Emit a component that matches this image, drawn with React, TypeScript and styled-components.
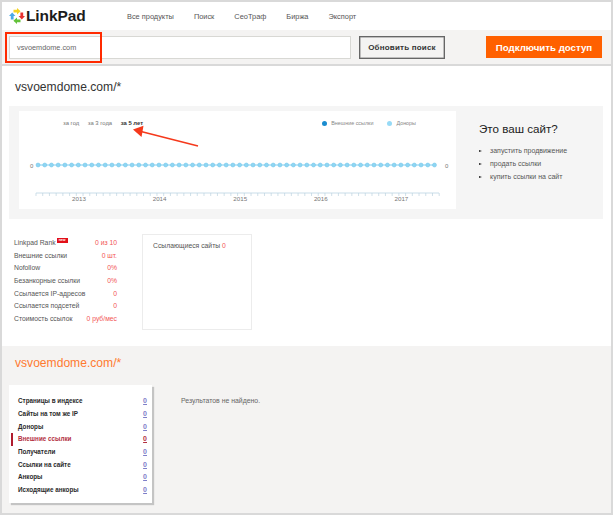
import React from 'react';
import styled, { createGlobalStyle } from 'styled-components';

const GlobalStyle = createGlobalStyle`
  html, body {
    margin: 0;
    padding: 0;
    background: #d9d9d9;
    font-family: "Liberation Sans", Arial, sans-serif;
    overflow: hidden;
  }
  * { box-sizing: border-box; }
`;

const Frame = styled.div`
  position: relative;
  width: 613px;
  height: 515px;
  padding: 2px;
  background: #d9d9d9;
`;

const Page = styled.div`
  display: flex;
  flex-direction: column;
  height: 511px;
  background: #fff;
`;

const Header = styled.header`
  display: flex;
  align-items: center;
  height: 28px;
  padding-left: 7px;
`;

const LogoWrap = styled.div`
  display: flex;
  align-items: center;
  gap: 1px;
  width: 118px;
`;

const LogoText = styled.span`
  font-size: 15.5px;
  font-weight: 700;
  color: #1c1c1c;
  letter-spacing: -0.1px;
`;

const Nav = styled.nav`
  display: flex;
  gap: 20px;
`;

const NavItem = styled.span`
  font-size: 7.4px;
  color: #555;
`;

const SearchBar = styled.div`
  display: flex;
  align-items: flex-start;
  height: 36px;
  padding: 6px 9px 0 7px;
  background: #f4f3f2;
  border-bottom: 2px solid #d9d9d9;
`;

const SearchInput = styled.div`
  display: flex;
  align-items: center;
  width: 342px;
  height: 23px;
  padding-left: 7px;
  background: #fff;
  border: 1px solid #d8d8d4;
  font-size: 7.3px;
  color: #666;
`;

const RefreshButton = styled.button`
  width: 86px;
  height: 23px;
  margin-left: 8px;
  padding: 0;
  background: #f4f3f2;
  border: 1px solid #666;
  box-shadow: inset 0 0 0 0.5px #888;
  font-family: inherit;
  font-size: 8px;
  font-weight: 700;
  letter-spacing: 0.2px;
  color: #333;
`;

const AccessButton = styled.button`
  width: 116px;
  height: 22px;
  margin-left: auto;
  padding: 0;
  background: #ff6000;
  border: none;
  font-family: inherit;
  font-size: 9.7px;
  font-weight: 700;
  color: #fff;
`;

const Summary = styled.section`
  display: flex;
  flex-direction: column;
  height: 280px;
`;

const SiteTitle = styled.h1<{ $accent?: boolean }>`
  margin: 0;
  padding: 0 0 0 13px;
  font-size: 12.1px;
  font-weight: 400;
  line-height: 18px;
  color: ${({ $accent }) => ($accent ? '#ff7a30' : '#333')};
`;

const TitleRow = styled.div`
  display: flex;
  align-items: center;
  height: 40px;
  padding-top: 2px;
`;

const ChartPanel = styled.div`
  display: flex;
  width: 594px;
  height: 113px;
  margin-left: 7px;
  padding: 5px 0 0 10px;
  background: #f5f5f5;
`;

const ChartCard = styled.div`
  position: relative;
  width: 437px;
  height: 98px;
  background: #fff;
`;

const ChartTop = styled.div`
  display: flex;
  align-items: center;
  height: 24px;
  padding-left: 44px;
`;

const RangeTab = styled.span<{ $active?: boolean }>`
  margin-right: 8.5px;
  font-size: 5.9px;
  font-weight: ${({ $active }) => ($active ? 700 : 400)};
  color: ${({ $active }) => ($active ? '#333' : '#777')};
`;

const Legend = styled.div`
  display: flex;
  align-items: center;
  margin-left: auto;
  padding-right: 40px;
`;

const LegendDot = styled.i<{ $color: string }>`
  width: 5px;
  height: 5px;
  margin-right: 4px;
  border-radius: 50%;
  background: ${({ $color }) => $color};
`;

const LegendLabel = styled.span`
  margin-right: 14px;
  font-size: 5.4px;
  color: #888;
  &:last-child { margin-right: 0; }
`;

const ArrowOverlay = styled.svg`
  position: absolute;
  left: 110px;
  top: 14px;
`;

const Promo = styled.div`
  padding: 10px 0 0 23px;
`;

const PromoTitle = styled.h2`
  margin: 0 0 7px;
  font-size: 11.6px;
  font-weight: 400;
  line-height: 16px;
  color: #222;
`;

const PromoList = styled.ul`
  margin: 0;
  padding: 0;
  list-style: none;
`;

const PromoItem = styled.li`
  display: flex;
  align-items: center;
  height: 13.1px;
  font-size: 7px;
  color: #555;
  &::before {
    content: '';
    width: 0;
    height: 0;
    margin-right: 8px;
    border-left: 3px solid #222;
    border-top: 1.5px solid transparent;
    border-bottom: 1.5px solid transparent;
  }
`;

const StatsRow = styled.div`
  display: flex;
  align-items: flex-start;
  padding: 15px 0 0 12px;
`;

const StatsTable = styled.div`
  display: flex;
  flex-direction: column;
  width: 103px;
  padding-top: 2px;
`;

const StatLine = styled.div`
  display: flex;
  justify-content: space-between;
  align-items: center;
  height: 12.7px;
  font-size: 6.8px;
  color: #555;
`;

const StatLabel = styled.span`
  position: relative;
  white-space: nowrap;
`;

const StatValue = styled.span`
  color: #f25555;
  white-space: nowrap;
`;

const NewBadge = styled.b`
  position: absolute;
  right: -12px;
  top: -1px;
  width: 11px;
  height: 5px;
  background: #e2101a;
  color: #fff;
  font-size: 3.5px;
  line-height: 5px;
  text-align: center;
`;

const SitesCard = styled.div`
  width: 110px;
  height: 96px;
  margin-left: 25px;
  padding: 6px 10px;
  border: 1px solid #ececec;
  font-size: 6.8px;
  line-height: 10px;
  color: #555;
`;

const Results = styled.section`
  flex: 1;
  padding-left: 7px;
  background: #f4f3f2;
`;

const ResultsTitle = styled(SiteTitle)`
  margin-left: -7px;
`;

const ResultsTitleRow = styled.div`
  display: flex;
  align-items: center;
  height: 39px;
  padding-bottom: 5px;
`;

const ResultsBody = styled.div`
  display: flex;
  align-items: flex-start;
`;

const SideMenu = styled.div`
  width: 143px;
  height: 118px;
  padding-top: 9.5px;
  background: #fff;
  box-shadow: 2px 2px 1px #c4c4c4;
`;

const MenuRow = styled.div<{ $active?: boolean }>`
  position: relative;
  display: flex;
  justify-content: space-between;
  align-items: center;
  height: 12.7px;
  padding: 0 5px 0 9px;
  font-size: 6.3px;
  font-weight: 700;
  color: ${({ $active }) => ($active ? '#b3303f' : '#2a2a2a')};
  &::before {
    content: '';
    display: ${({ $active }) => ($active ? 'block' : 'none')};
    position: absolute;
    left: 2px;
    top: 0;
    width: 2px;
    height: 13px;
    background: #b01c2e;
  }
`;

const MenuCount = styled.span<{ $active?: boolean }>`
  font-size: 7px;
  color: ${({ $active }) => ($active ? '#b3303f' : '#7f7fc9')};
  text-decoration: underline;
`;

const NoResults = styled.div`
  margin: 11px 0 0 29px;
  font-size: 6.9px;
  line-height: 10px;
  color: #666;
`;

const SearchHighlight = styled.div`
  position: absolute;
  left: 5px;
  top: 32px;
  width: 97px;
  height: 31px;
  border: 2px solid #ff2a00;
`;

const logoArrow = 'M4.5 1.8H8V0l3.6 3.2L8 6.4V4.6H4.5z';
const logoColors = ['#f5d321', '#e8322e', '#63c23a', '#4aa8e8'];

const Logo = () => (
  <svg width="16" height="16" viewBox="0 0 16 16">
    {logoColors.map((color, i) => (
      <path key={color} d={logoArrow} fill={color} transform={`rotate(${i * 90} 8 8)`} />
    ))}
  </svg>
);

const years = ['2013', '2014', '2015', '2016', '2017'];
const points = Array.from({ length: 60 }, (_, i) => 19 + i * 6.72);
const ticks = Array.from({ length: 61 }, (_, i) => 17 + i * 6.72);

const TrendChart = () => (
  <svg width="437" height="74" viewBox="0 0 437 74">
    <text x="11" y="32.5" fontSize="6" fill="#777">0</text>
    <text x="426" y="32.5" fontSize="6" fill="#777">0</text>
    <line x1="19" y1="30" x2="416" y2="30" stroke="#7fcdee" strokeWidth="1" />
    {points.map(x => (
      <circle key={x} cx={x} cy="30" r="2" fill="#8fd6f3" stroke="#6cc3e8" strokeWidth="0.5" />
    ))}
    <line x1="17" y1="58" x2="420" y2="58" stroke="#c9dde9" strokeWidth="1" />
    {ticks.map(x => (
      <line key={x} x1={x} y1="58" x2={x} y2="61" stroke="#bcd2df" strokeWidth="0.7" />
    ))}
    {years.map((year, i) => (
      <text key={year} x={60 + i * 80.6} y="66" fontSize="6.2" fill="#777" textAnchor="middle">{year}</text>
    ))}
  </svg>
);

const stats = [
  ['Внешние ссылки', '0 шт.'],
  ['Nofollow', '0%'],
  ['Безанкорные ссылки', '0%'],
  ['Ссылается IP-адресов', '0'],
  ['Ссылается подсетей', '0'],
  ['Стоимость ссылок', '0 руб/мес'],
];

const menu = [
  'Страницы в индексе',
  'Сайты на том же IP',
  'Доноры',
  'Внешние ссылки',
  'Получатели',
  'Ссылки на сайте',
  'Анкоры',
  'Исходящие анкоры',
];

const App: React.FC = () => {
  return (
    <Frame>
      <GlobalStyle />
      <Page>
        <Header>
          <LogoWrap>
            <Logo />
            <LogoText>LinkPad</LogoText>
          </LogoWrap>
          <Nav>
            <NavItem>Все продукты</NavItem>
            <NavItem>Поиск</NavItem>
            <NavItem>СеоТраф</NavItem>
            <NavItem>Биржа</NavItem>
            <NavItem>Экспорт</NavItem>
          </Nav>
        </Header>

        <SearchBar>
          <SearchInput>vsvoemdome.com</SearchInput>
          <RefreshButton>Обновить поиск</RefreshButton>
          <AccessButton>Подключить доступ</AccessButton>
        </SearchBar>

        <Summary>
          <TitleRow>
            <SiteTitle>vsvoemdome.com/*</SiteTitle>
          </TitleRow>
          <ChartPanel>
            <ChartCard>
              <ChartTop>
                <RangeTab>за год</RangeTab>
                <RangeTab>за 3 года</RangeTab>
                <RangeTab $active>за 5 лет</RangeTab>
                <Legend>
                  <LegendDot $color="#1a8ccf" />
                  <LegendLabel>Внешние ссылки</LegendLabel>
                  <LegendDot $color="#97daf6" />
                  <LegendLabel>Доноры</LegendLabel>
                </Legend>
              </ChartTop>
              <TrendChart />
              <ArrowOverlay width="72" height="26" viewBox="0 0 72 26">
                <line x1="69" y1="21" x2="12" y2="6.5" stroke="#f5391c" strokeWidth="1.6" />
                <path d="M4 4.5 14.5 .8 12.5 12z" fill="#f5391c" />
              </ArrowOverlay>
            </ChartCard>
            <Promo>
              <PromoTitle>Это ваш сайт?</PromoTitle>
              <PromoList>
                <PromoItem>запустить продвижение</PromoItem>
                <PromoItem>продать ссылки</PromoItem>
                <PromoItem>купить ссылки на сайт</PromoItem>
              </PromoList>
            </Promo>
          </ChartPanel>

          <StatsRow>
            <StatsTable>
              <StatLine>
                <StatLabel>
                  Linkpad Rank
                  <NewBadge>new</NewBadge>
                </StatLabel>
                <StatValue>0 из 10</StatValue>
              </StatLine>
              {stats.map(([label, value]) => (
                <StatLine key={label}>
                  <StatLabel>{label}</StatLabel>
                  <StatValue>{value}</StatValue>
                </StatLine>
              ))}
            </StatsTable>
            <SitesCard>
              Ссылающиеся сайты <StatValue>0</StatValue>
            </SitesCard>
          </StatsRow>
        </Summary>

        <Results>
          <ResultsTitleRow>
            <ResultsTitle $accent>vsvoemdome.com/*</ResultsTitle>
          </ResultsTitleRow>
          <ResultsBody>
            <SideMenu>
              {menu.map((item, i) => (
                <MenuRow key={item} $active={i === 3}>
                  {item}
                  <MenuCount $active={i === 3}>0</MenuCount>
                </MenuRow>
              ))}
            </SideMenu>
            <NoResults>Результатов не найдено.</NoResults>
          </ResultsBody>
        </Results>
      </Page>
      <SearchHighlight />
    </Frame>
  );
};

export default App;
